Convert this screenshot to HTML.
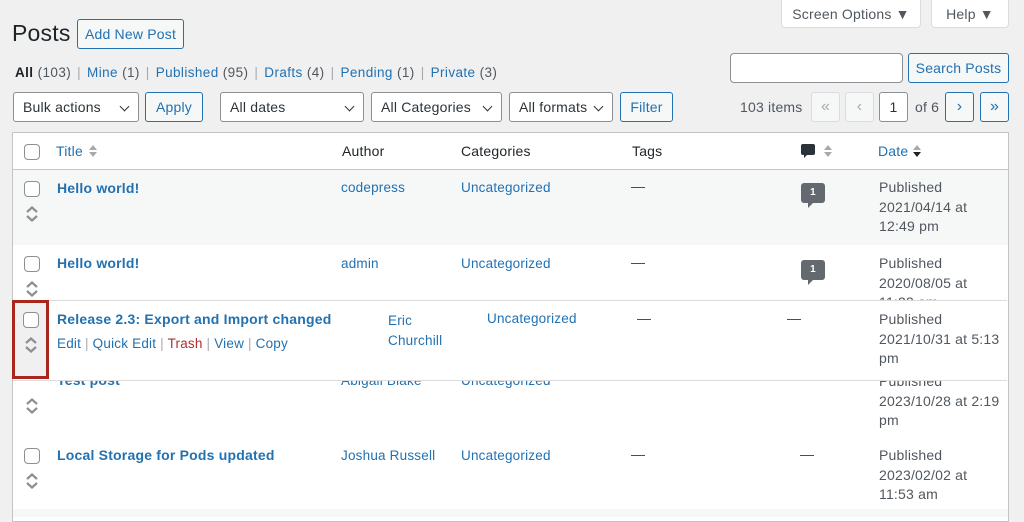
<!DOCTYPE html>
<html><head><meta charset="utf-8"><style>
*{box-sizing:border-box;margin:0;padding:0}
body{width:1024px;height:517px;overflow:hidden;background:#f0f0f1;font-family:"Liberation Sans",Arial,sans-serif;font-size:14px;color:#3c434a;position:relative;letter-spacing:0.2px}
.a{position:absolute;white-space:nowrap}
a,.l{color:#2271b1;text-decoration:none}
.btn{position:absolute;border:1px solid #2271b1;border-radius:3px;background:#f6f7f7;color:#2271b1;font-size:14px;display:flex;align-items:center;justify-content:center}
.sel{position:absolute;border:1px solid #8c8f94;border-radius:3px;background:#fff;color:#2c3338;font-size:14px;padding-left:9px;display:flex;align-items:center}
.sel:after{content:"";position:absolute;right:10px;top:10px;width:6px;height:6px;border-right:1.6px solid #2c3338;border-bottom:1.6px solid #2c3338;transform:rotate(45deg)}
.cb{position:absolute;width:16px;height:16px;border:1px solid #8c8f94;border-radius:4px;background:#fff}
.t{font-weight:bold;color:#2271b1}
.dt{color:#50575e;line-height:19.5px;white-space:normal;width:125px}
.bub{position:absolute;width:24px;height:20px;background:#646970;border-radius:3px;color:#fff;font-size:10px;font-weight:bold;text-align:center;line-height:20px}
.bub:after{content:"";position:absolute;left:7px;bottom:-5px;border-left:5px solid #646970;border-bottom:5px solid transparent}
.pg{position:absolute;top:92px;width:29px;height:30px;border-radius:3px;display:flex;align-items:center;justify-content:center;font-size:16px}
.dr{position:absolute;left:24px;width:16px;height:18px}
.s{color:#a7aaad;margin:0 6px}
</style></head><body>
<div class="a" style="left:781px;top:-2px;width:140px;height:30px;background:#fff;border:1px solid #dcdcde;border-radius:0 0 4px 4px;color:#50575e;font-size:14px;text-align:center;line-height:30px">Screen Options ▼</div>
<div class="a" style="left:931px;top:-2px;width:78px;height:30px;background:#fff;border:1px solid #dcdcde;border-radius:0 0 4px 4px;color:#50575e;font-size:14px;text-align:center;line-height:30px">Help ▼</div>

<div class="a" style="left:12px;top:20px;font-size:23px;color:#1d2327">Posts</div>
<div class="btn" style="left:77px;top:19px;width:107px;height:30px">Add New Post</div>

<div class="a" style="left:15px;top:65px;font-size:13.5px;color:#50575e;letter-spacing:0.4px"><b style="color:#1d2327;font-weight:600">All</b> (103)<span class="s">|</span><a>Mine</a> (1)<span class="s">|</span><a>Published</a> (95)<span class="s">|</span><a>Drafts</a> (4)<span class="s">|</span><a>Pending</a> (1)<span class="s">|</span><a>Private</a> (3)</div>

<div class="a" style="left:730px;top:53px;width:173px;height:30px;background:#fff;border:1px solid #8c8f94;border-radius:4px"></div>
<div class="btn" style="left:908px;top:53px;width:101px;height:30px">Search Posts</div>

<div class="sel" style="left:13px;top:92px;width:126px;height:30px">Bulk actions</div>
<div class="btn" style="left:145px;top:92px;width:58px;height:30px">Apply</div>
<div class="sel" style="left:220px;top:92px;width:144px;height:30px">All dates</div>
<div class="sel" style="left:371px;top:92px;width:131px;height:30px">All Categories</div>
<div class="sel" style="left:509px;top:92px;width:104px;height:30px">All formats</div>
<div class="btn" style="left:620px;top:92px;width:53px;height:30px">Filter</div>
<div class="a" style="left:740px;top:99px;color:#50575e">103 items</div>
<div class="pg" style="left:811px;border:1px solid #dcdcde;color:#a7aaad;background:#f6f7f7">«</div>
<div class="pg" style="left:845px;border:1px solid #dcdcde;color:#a7aaad;background:#f6f7f7">‹</div>
<div class="pg" style="left:879px;border:1px solid #8c8f94;background:#fff;color:#2c3338;font-size:14px">1</div>
<div class="a" style="left:915px;top:99px;color:#50575e">of 6</div>
<div class="pg" style="left:945px;border:1px solid #2271b1;color:#2271b1;background:#f6f7f7">›</div>
<div class="pg" style="left:980px;border:1px solid #2271b1;color:#2271b1;background:#f6f7f7">»</div>

<!-- table -->
<div class="a" style="left:12px;top:132px;width:997px;height:390px;background:#fff;border:1px solid #c3c4c7"></div>
<div class="a" style="left:13px;top:169px;width:995px;height:1px;background:#c3c4c7"></div>
<div class="a" style="left:13px;top:170px;width:995px;height:75px;background:#f6f7f7"></div>
<div class="a" style="left:13px;top:509px;width:995px;height:8px;background:#f6f7f7"></div>

<div class="cb" style="left:24px;top:144px"></div>
<div class="a l" style="left:56px;top:143px">Title</div>
<svg class="a" style="left:89px;top:143px" width="8" height="16" viewBox="0 0 8 16"><path d="M0 7L4 2L8 7Z M0 9L4 14L8 9Z" fill="#a7aaad"/></svg>
<div class="a" style="left:342px;top:143px;color:#1d2327">Author</div>
<div class="a" style="left:461px;top:143px;color:#1d2327">Categories</div>
<div class="a" style="left:632px;top:143px;color:#1d2327">Tags</div>
<div class="a" style="left:801px;top:144px;width:14px;height:11px;background:#2c3338;border-radius:2px"></div>
<div class="a" style="left:804px;top:154px;border-left:4px solid #2c3338;border-bottom:4px solid transparent"></div>
<svg class="a" style="left:824px;top:143px" width="8" height="16" viewBox="0 0 8 16"><path d="M0 7L4 2L8 7Z M0 9L4 14L8 9Z" fill="#a7aaad"/></svg>
<div class="a l" style="left:878px;top:143px">Date</div>
<svg class="a" style="left:913px;top:143px" width="8" height="16" viewBox="0 0 8 16"><path d="M0 7L4 2L8 7Z" fill="#a7aaad"/><path d="M0 9L4 14L8 9Z" fill="#1d2327"/></svg>

<!-- row1 -->
<div class="cb" style="left:24px;top:181px"></div>
<svg class="dr" style="top:205px" viewBox="0 0 16 18"><path d="M3 7L8 2.5L13 7M3 11L8 15.5L13 11" fill="none" stroke="#8c8f94" stroke-width="2.2"/></svg>
<div class="a t" style="left:57px;top:180px">Hello world!</div>
<div class="a l" style="left:341px;top:180px;font-size:13.5px">codepress</div>
<div class="a l" style="left:461px;top:180px;font-size:13.5px">Uncategorized</div>
<div class="a" style="left:631px;top:178px">—</div>
<div class="bub" style="left:801px;top:183px">1</div>
<div class="a dt" style="left:879px;top:178px">Published 2021/04/14 at 12:49 pm</div>

<!-- row2 -->
<div class="cb" style="left:24px;top:256px"></div>
<svg class="dr" style="top:280px" viewBox="0 0 16 18"><path d="M3 7L8 2.5L13 7M3 11L8 15.5L13 11" fill="none" stroke="#8c8f94" stroke-width="2.2"/></svg>
<div class="a t" style="left:57px;top:255px">Hello world!</div>
<div class="a l" style="left:341px;top:256px;font-size:13.5px">admin</div>
<div class="a l" style="left:461px;top:256px;font-size:13.5px">Uncategorized</div>
<div class="a" style="left:631px;top:254px">—</div>
<div class="bub" style="left:801px;top:260px">1</div>
<div class="a dt" style="left:879px;top:254px;height:46px;overflow:hidden">Published 2020/08/05 at 11:23 am</div>

<!-- row4 partially hidden -->
<div class="a t" style="left:57px;top:372px">Test post</div>
<div class="a l" style="left:341px;top:373px;font-size:13.5px">Abigail Blake</div>
<div class="a l" style="left:461px;top:373px;font-size:13.5px">Uncategorized</div>
<div class="a dt" style="left:879px;top:372px">Published 2023/10/28 at 2:19 pm</div>
<svg class="dr" style="top:397px" viewBox="0 0 16 18"><path d="M3 7L8 2.5L13 7M3 11L8 15.5L13 11" fill="none" stroke="#8c8f94" stroke-width="2.2"/></svg>

<!-- overlay row -->
<div class="a" style="left:13px;top:300px;width:994px;height:81px;background:#fff;border-top:1px solid #dcdcde;border-bottom:1px solid #dcdcde"></div>
<div class="a" style="left:12px;top:300px;width:37px;height:79px;background:#f0f0f1;border:3px solid #a8261b"></div>
<div class="cb" style="left:23px;top:312px"></div>
<svg class="dr" style="top:336px;left:23px" viewBox="0 0 16 18"><path d="M3 7L8 2.5L13 7M3 11L8 15.5L13 11" fill="none" stroke="#8c8f94" stroke-width="2.2"/></svg>
<div class="a t" style="left:57px;top:311px">Release 2.3: Export and Import changed</div>
<div class="a" style="left:57px;top:336px;font-size:13.5px;color:#a7aaad"><a>Edit</a> | <a>Quick Edit</a> | <span style="color:#b32d2e">Trash</span> | <a>View</a> | <a>Copy</a></div>
<div class="a l" style="left:388px;top:311px;font-size:13.5px;line-height:20px">Eric<br>Churchill</div>
<div class="a l" style="left:487px;top:311px;font-size:13.5px">Uncategorized</div>
<div class="a" style="left:637px;top:310px">—</div>
<div class="a" style="left:787px;top:310px">—</div>
<div class="a dt" style="left:879px;top:310px">Published 2021/10/31 at 5:13 pm</div>

<!-- row5 -->
<div class="cb" style="left:24px;top:448px"></div>
<svg class="dr" style="top:472px" viewBox="0 0 16 18"><path d="M3 7L8 2.5L13 7M3 11L8 15.5L13 11" fill="none" stroke="#8c8f94" stroke-width="2.2"/></svg>
<div class="a t" style="left:57px;top:447px">Local Storage for Pods updated</div>
<div class="a l" style="left:341px;top:448px;font-size:13.5px">Joshua Russell</div>
<div class="a l" style="left:461px;top:448px;font-size:13.5px">Uncategorized</div>
<div class="a" style="left:631px;top:446px">—</div>
<div class="a" style="left:800px;top:446px">—</div>
<div class="a dt" style="left:879px;top:446px">Published 2023/02/02 at 11:53 am</div>
</body></html>
